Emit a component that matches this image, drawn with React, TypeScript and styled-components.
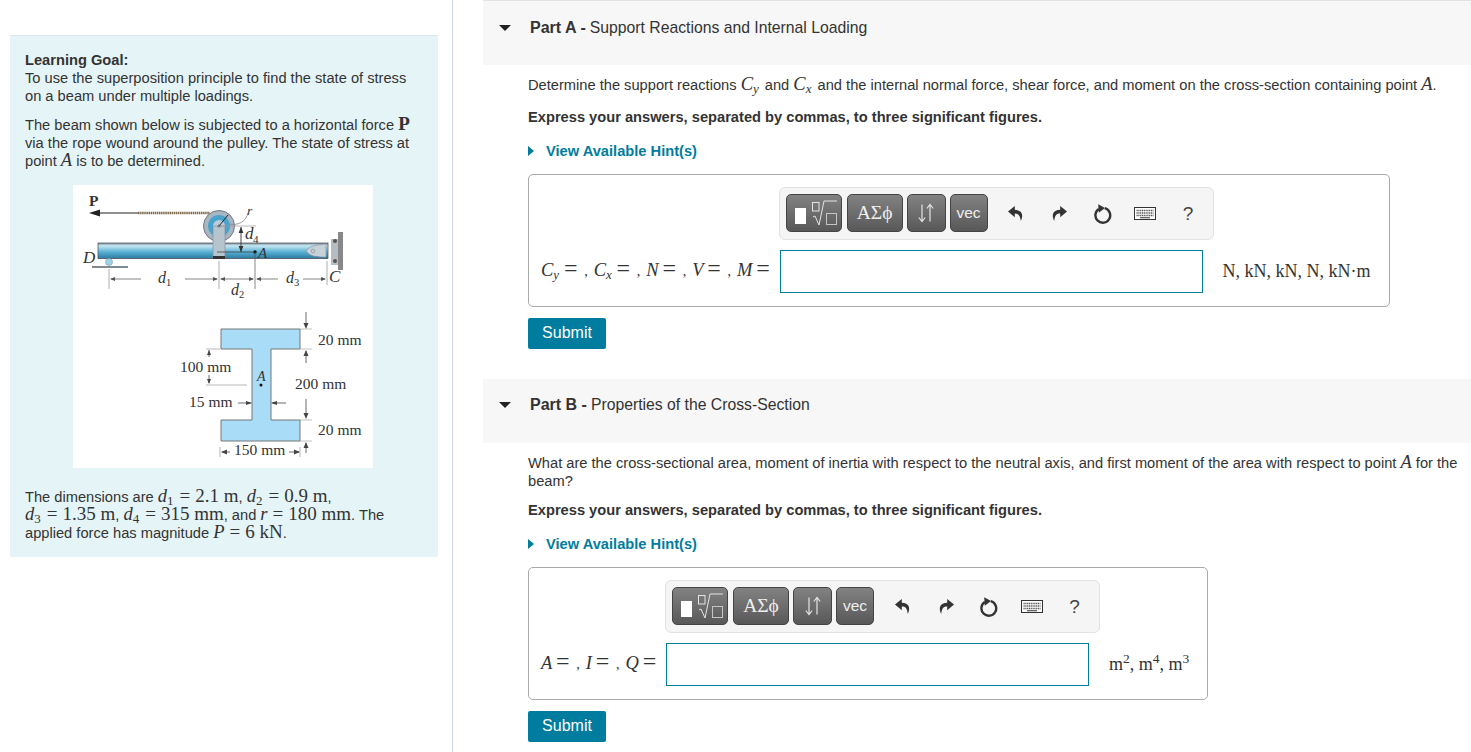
import React from "react";
import styled, { createGlobalStyle } from "styled-components";

const Global = createGlobalStyle`
  html, body { margin: 0; padding: 0; background: #fff; }
  body { font-family: "Liberation Sans", Arial, sans-serif; font-size: 14.67px; line-height: 18px; color: #333; }
`;

const Page = styled.div`
  display: flex;
  width: 1471px;
  height: 752px;
  overflow: hidden;
`;
const LeftColumn = styled.aside`
  width: 452px;
  height: 752px;
  flex: none;
  border-right: 1px solid #c9d6e2;
  padding-top: 35px;
  box-sizing: content-box;
`;
const GoalPanel = styled.div`
  margin-left: 10px;
  width: 428px;
  box-sizing: border-box;
  background: #e5f5f7;
  border-top: 1px solid #dde6ea;
  padding: 15px 14px 15px 15px;
`;
const GoalTitle = styled.div`
  font-weight: bold;
`;
const GoalText = styled.p<{ $gap?: number }>`
  margin: ${(p) => p.$gap ?? 0}px 0 0;
`;
const Figure = styled.div`
  width: 300px;
  height: 283px;
  margin: 15px 0 20px 48px;
  background: #fff;
`;
const RightColumn = styled.main`
  flex: 1;
  padding-left: 30px;
  min-width: 0;
`;
const PartHeader = styled.header<{ $first?: boolean }>`
  height: ${(p) => (p.$first ? 65 : 64)}px;
  margin-top: ${(p) => (p.$first ? 0 : 30)}px;
  background: #f7f7f7;
  border-top: ${(p) => (p.$first ? "1px solid #e3e3e3" : "none")};
  display: flex;
  align-items: flex-start;
  padding: ${(p) => (p.$first ? 18 : 17)}px 0 0 16px;
  box-sizing: border-box;
  font-size: 15.75px;
  color: #333;
`;
const Caret = styled.span`
  width: 0;
  height: 0;
  border-left: 6px solid transparent;
  border-right: 6px solid transparent;
  border-top: 6px solid #222;
  margin: 6px 19px 0 0;
`;
const PartLabel = styled.strong`
  font-weight: bold;
  font-size: 16px;
  margin-right: 4px;
`;
const PartBody = styled.section`
  padding: 11px 10px 0 45px;
`;
const Prompt = styled.p`
  margin: 0;
`;
const Instruction = styled.p<{ $top: number }>`
  margin: ${(p) => p.$top}px 0 0;
  font-weight: bold;
`;
const HintLink = styled.div`
  display: flex;
  align-items: center;
  margin-top: 16px;
  color: #007c9e;
  font-weight: bold;
`;
const HintCaret = styled.span`
  width: 0;
  height: 0;
  border-top: 5px solid transparent;
  border-bottom: 5px solid transparent;
  border-left: 6px solid #007c9e;
  margin-right: 12px;
`;
const AnswerBox = styled.div`
  margin-top: 14px;
  width: fit-content;
  box-sizing: border-box;
  border: 1px solid #aaa;
  border-radius: 5px;
  padding: 12px 18px 13px 12px;
  display: grid;
  grid-template-columns: auto 423px auto;
  row-gap: 10px;
`;
const Toolbar = styled.div`
  grid-column: 2 / 4;
  width: 435px;
  height: 53px;
  margin-left: -1px;
  box-sizing: border-box;
  background: #f5f5f5;
  border: 1px solid #e2e2e2;
  border-radius: 6px;
  display: flex;
  align-items: center;
  padding: 0 0 0 6px;
`;
const TemplateButton = styled.div<{ $w: number; $mr: number }>`
  width: ${(p) => p.$w}px;
  height: 38px;
  margin-right: ${(p) => p.$mr}px;
  margin-bottom: 1px;
  flex: none;
  box-sizing: border-box;
  border: 1px solid #444;
  border-radius: 5px;
  background: linear-gradient(#828282, #585858);
  color: #eee;
  display: flex;
  align-items: center;
  justify-content: center;
`;
const SerifGlyphs = styled.span`
  font-family: "Liberation Serif", serif;
  font-size: 19.5px;
`;
const SansGlyphs = styled.span`
  font-size: 15.5px;
`;
const ToolIcon = styled.span`
  width: 43px;
  flex: none;
  display: flex;
  justify-content: center;
  color: #444;
  font-size: 19px;
`;
const MathLabel = styled.div`
  grid-column: 1;
  align-self: center;
  margin: 0 6px 2px 0;
  white-space: nowrap;
`;
const AnswerInput = styled.div`
  grid-column: 2;
  height: 43px;
  box-sizing: border-box;
  border: 1px solid #007c9e;
  background: #fff;
`;
const Units = styled.div`
  grid-column: 3;
  align-self: center;
  margin: 0 0 1px 20px;
  white-space: nowrap;
  font-family: "Liberation Serif", serif;
  font-size: 18px;
`;
const SubmitButton = styled.button`
  display: block;
  margin-top: 11px;
  width: 78px;
  height: 31px;
  padding: 0 0 2px;
  border: none;
  border-radius: 2px;
  background: #007c9e;
  color: #fff;
  font: 16px "Liberation Sans", Arial, sans-serif;
`;
const V = styled.i<{ $size?: number }>`
  font-family: "Liberation Serif", serif;
  font-style: italic;
  font-size: ${(p) => p.$size ?? 18.5}px;
  line-height: 0;
`;
const R = styled.span<{ $bold?: boolean }>`
  font-family: "Liberation Serif", serif;
  font-size: 19px;
  line-height: 0;
  font-weight: ${(p) => (p.$bold ? "bold" : "normal")};
`;
const Sub = styled.sub<{ $after?: number }>`
  font-family: "Liberation Serif", serif;
  font-size: 13px;
  line-height: 0;
  vertical-align: -3px;
  margin-right: ${(p) => p.$after ?? 0}px;
`;
const Sup = styled.sup`
  font-family: "Liberation Serif", serif;
  font-size: 13.5px;
  line-height: 0;
  vertical-align: 7px;
`;
const Eq = styled.span<{ $large?: boolean }>`
  font-family: "Liberation Serif", serif;
  font-size: ${(p) => (p.$large ? 24 : 19)}px;
  line-height: 0;
  margin: 0 ${(p) => (p.$large ? 3.75 : 5)}px;
`;
const Comma = styled.span`
  font-family: "Liberation Serif", serif;
  font-size: 14px;
  line-height: 0;
  margin: 0 6px 0 3px;
`;

const RootIcon = () => (
  <svg width="54" height="36" viewBox="0 0 54 36" fill="none">
    <rect x="8" y="13" width="11" height="16" fill="#fff" />
    <rect x="25.5" y="7.5" width="6.5" height="8.5" stroke="#e4e4e4" />
    <path d="M26 22l2-1 4 9 5-24h13" stroke="#e4e4e4" strokeWidth="1" />
    <rect x="39.5" y="18.5" width="10" height="11" stroke="#c4c4c4" />
  </svg>
);
const SwapIcon = () => (
  <svg width="18" height="20" viewBox="0 0 18 20" fill="none" stroke="#e4e4e4" strokeWidth="1.2">
    <path d="M5 1.5V18M1.8 14.5 5 18.5l3.2-4" />
    <path d="M13 18.5V2M9.8 5.5 13 1.5l3.2 4" />
  </svg>
);
const UndoIcon = () => (
  <svg width="16" height="15" viewBox="0 0 16 15" fill="#333">
    <path d="M6.8 0 0 5.6l6.8 5.6V7.6c3.6 0 5.4 1.8 6 7.4 3-6.4 1.2-11-6-11.2z" />
  </svg>
);
const RedoIcon = () => (
  <svg width="16" height="15" viewBox="0 0 16 15" fill="#333">
    <path d="M9.2 0 16 5.6l-6.8 5.6V7.6c-3.6 0-5.4 1.8-6 7.4-3-6.4-1.2-11 6-11.2z" />
  </svg>
);
const ReloadIcon = () => (
  <svg width="19" height="20" viewBox="0 0 19 20" fill="none">
    <path d="M11.8 4.2a7.4 7.4 0 1 1-6 .9" stroke="#333" strokeWidth="2.4" />
    <path d="M5.2 0.3 12 4.1 5.8 8.8z" fill="#333" />
  </svg>
);
const KeyboardIcon = () => (
  <svg width="22" height="13" viewBox="0 0 22 13" fill="none">
    <rect x="0.5" y="0.5" width="21" height="12" fill="#fff" stroke="#333" />
    <path d="M2.5 3.5h17M2.5 6h17M2.5 8.5h17" stroke="#555" strokeWidth="1.4" strokeDasharray="1.2 .6" />
    <path d="M6 10.7h10" stroke="#555" strokeWidth="1.2" />
  </svg>
);

const FigureArt = () => (
  <svg width="300" height="283" viewBox="0 0 300 283" fontFamily="'Liberation Serif', serif" fill="#333">
    <defs>
      <linearGradient id="beam" x1="0" y1="0" x2="0" y2="1">
        <stop offset="0" stopColor="#7f8f9a" />
        <stop offset="0.18" stopColor="#c4e6f2" />
        <stop offset="0.6" stopColor="#55aed2" />
        <stop offset="1" stopColor="#2a7ba0" />
      </linearGradient>
    </defs>
    <text x="16" y="21" fontSize="15.5" fontWeight="bold">P</text>
    <path d="M26 28H65" stroke="#222" strokeWidth="1.2" />
    <path d="M16 28l11-3.5v7z" fill="#222" />
    <path d="M65 28H137" stroke="#7d6a4c" strokeWidth="2.4" strokeDasharray="1.5 .6" />
    <rect x="25" y="58" width="230" height="15.5" fill="url(#beam)" stroke="#445" strokeWidth=".7" />
    <circle cx="146" cy="41" r="15.5" fill="#a7b7c2" stroke="#778" />
    <circle cx="146" cy="41" r="11" fill="#4aa3cc" />
    <circle cx="146" cy="41" r="6" fill="#bcd" />
    <rect x="140" y="41" width="12" height="32" fill="#b5c4cd" stroke="#889" strokeWidth=".6" />
    <rect x="140" y="71" width="12" height="3" fill="#333" />
    <circle cx="146" cy="41" r="1.6" fill="#778" />
    <path d="M146 41l9-11" stroke="#222" strokeWidth="1" />
    <path d="M156 39c10 2 17-3 19-11" stroke="#888" strokeWidth=".8" fill="none" />
    <text x="174" y="30" fontSize="13.5" fontStyle="italic">r</text>
    <path d="M146 41H183" stroke="#999" strokeWidth=".7" />
    <path d="M168 42V67" stroke="#333" strokeWidth=".9" />
    <path d="M168 42l-2.4 6h4.8zM168 67l-2.4-6h4.8z" fill="#333" />
    <text x="172" y="54" fontSize="17" fontStyle="italic">d</text>
    <text x="180" y="58" fontSize="11">4</text>
    <path d="M144 67H182" stroke="#333" strokeWidth=".7" />
    <circle cx="182" cy="67" r="1.7" fill="#111" />
    <text x="185" y="73" fontSize="15" fontStyle="italic">A</text>
    <path d="M182 67V104" stroke="#555" strokeWidth=".7" />
    <path d="M233 66c4-6 12-6 20-7v13c-8 0-16 0-20-6z" fill="#c6d2d8" stroke="#889" strokeWidth=".6" />
    <circle cx="240" cy="66" r="1.8" fill="none" stroke="#888" strokeWidth=".6" />
    <rect x="265" y="47" width="5" height="38" fill="#888" />
    <rect x="258" y="54" width="7" height="26" fill="#b5bcc2" />
    <circle cx="262" cy="56" r="2" fill="#555" />
    <circle cx="262" cy="76" r="2" fill="#555" />
    <text x="10" y="78" fontSize="17" fontStyle="italic">D</text>
    <circle cx="36" cy="77" r="3.5" fill="#9cd3e8" stroke="#789" strokeWidth=".5" />
    <rect x="19" y="81" width="36" height="2" fill="#7f8a90" />
    <path d="M36 84V104M146 76V104M254 76V100" stroke="#999" strokeWidth=".8" />
    <path d="M38 94H68M112 94H144M148 94H180M184 94H205M230 94H252" stroke="#666" strokeWidth=".8" />
    <path d="M37 94l5-2v4zM145 94l-5-2v4zM147 94l5-2v4zM181 94l-5-2v4zM183 94l5-2v4zM253 94l-5-2v4z" fill="#555" />
    <text x="85" y="98" fontSize="16" fontStyle="italic">d</text>
    <text x="93" y="101" fontSize="10.5">1</text>
    <text x="158" y="110" fontSize="16" fontStyle="italic">d</text>
    <text x="166" y="113" fontSize="10.5">2</text>
    <text x="213" y="98" fontSize="16" fontStyle="italic">d</text>
    <text x="221" y="101" fontSize="10.5">3</text>
    <text x="256" y="97" fontSize="17" fontStyle="italic">C</text>

    <path d="M148 144H227V164H198V235H227V256H148V235H179V164H148Z" fill="#a9dcf6" stroke="#777" strokeWidth="1" />
    <path d="M233 127V142M233 166V178M233 214V229M233 258V268" stroke="#444" strokeWidth=".8" />
    <path d="M233 144l-2.5-6h5zM233 165l-2.5 6h5zM233 234l-2.5-6h5zM233 257l-2.5 6h5z" fill="#444" />
    <path d="M227 144H239M227 164H239M227 235H239M227 256H239" stroke="#aaa" strokeWidth=".7" />
    <text x="245" y="160" fontSize="15.5">20 mm</text>
    <text x="245" y="250" fontSize="15.5">20 mm</text>
    <text x="222" y="204" fontSize="15.5">200 mm</text>
    <text x="107" y="187" fontSize="15.5">100 mm</text>
    <text x="116" y="222" fontSize="15.5">15 mm</text>
    <text x="161" y="270" fontSize="15.5">150 mm</text>
    <path d="M133 164H147M133 200H174" stroke="#999" strokeWidth=".7" />
    <path d="M136 165V172M136 190V198" stroke="#444" strokeWidth=".8" />
    <path d="M136 165l-2 5h4zM136 199l-2-5h4z" fill="#444" />
    <path d="M165 218H178M199 218H213" stroke="#444" strokeWidth=".8" />
    <path d="M179 218l-6-2v4zM198 218l6-2v4z" fill="#444" />
    <path d="M147 262V272M227 262V272" stroke="#888" strokeWidth=".6" />
    <path d="M149 267H157M216 267H226" stroke="#444" strokeWidth=".8" />
    <path d="M148 267l6-2.5v5zM227 267l-6-2.5v5z" fill="#444" />
    <text x="184" y="196" fontSize="14" fontStyle="italic">A</text>
    <circle cx="188" cy="200" r="1.5" fill="#111" />
  </svg>
);

const ToolbarContent = () => (
  <Toolbar>
    <TemplateButton $w={56} $mr={5}><RootIcon /></TemplateButton>
    <TemplateButton $w={56} $mr={4}><SerifGlyphs>ΑΣϕ</SerifGlyphs></TemplateButton>
    <TemplateButton $w={39} $mr={4}><SwapIcon /></TemplateButton>
    <TemplateButton $w={38} $mr={7}><SansGlyphs>vec</SansGlyphs></TemplateButton>
    <ToolIcon><UndoIcon /></ToolIcon>
    <ToolIcon><RedoIcon /></ToolIcon>
    <ToolIcon><ReloadIcon /></ToolIcon>
    <ToolIcon><KeyboardIcon /></ToolIcon>
    <ToolIcon>?</ToolIcon>
  </Toolbar>
);

export default function App() {
  return (
    <Page>
      <Global />
      <LeftColumn>
        <GoalPanel>
          <GoalTitle>Learning Goal:</GoalTitle>
          <GoalText>To use the superposition principle to find the state of stress on a beam under multiple loadings.</GoalText>
          <GoalText $gap={11}>
            The beam shown below is subjected to a horizontal force <R $bold>P</R> via the rope wound around the pulley. The state of stress at point <V>A</V> is to be determined.
          </GoalText>
          <Figure><FigureArt /></Figure>
          <GoalText>
            The dimensions are <V>d</V><Sub $after={1}>1</Sub><Eq>=</Eq><R>2.1 m</R>, <V>d</V><Sub $after={1}>2</Sub><Eq>=</Eq><R>0.9 m</R>,<br />
            <V>d</V><Sub $after={1}>3</Sub><Eq>=</Eq><R>1.35 m</R>, <V>d</V><Sub $after={1}>4</Sub><Eq>=</Eq><R>315 mm</R>, and <V>r</V><Eq>=</Eq><R>180 mm</R>. The<br />
            applied force has magnitude <V>P</V><Eq>=</Eq><R>6 kN</R>.
          </GoalText>
        </GoalPanel>
      </LeftColumn>
      <RightColumn>
        <PartHeader $first>
          <Caret />
          <span><PartLabel>Part A -</PartLabel>Support Reactions and Internal Loading</span>
        </PartHeader>
        <PartBody>
          <Prompt>
            Determine the support reactions <V>C</V><Sub $after={2}><i>y</i></Sub> and <V>C</V><Sub $after={2}><i>x</i></Sub> and the internal normal force, shear force, and moment on the cross-section containing point <V>A</V>.
          </Prompt>
          <Instruction $top={14}>Express your answers, separated by commas, to three significant figures.</Instruction>
          <HintLink><HintCaret />View Available Hint(s)</HintLink>
          <AnswerBox>
            <ToolbarContent />
            <MathLabel>
              <V>C</V><Sub $after={1}><i>y</i></Sub><Eq $large>=</Eq><Comma>,</Comma><V>C</V><Sub $after={1}><i>x</i></Sub><Eq $large>=</Eq><Comma>,</Comma><V>N</V><Eq $large>=</Eq><Comma>,</Comma><V>V</V><Eq $large>=</Eq><Comma>,</Comma><V>M</V><Eq $large>=</Eq>
            </MathLabel>
            <AnswerInput />
            <Units>N, kN, kN, N, kN·m</Units>
          </AnswerBox>
          <SubmitButton>Submit</SubmitButton>
        </PartBody>
        <PartHeader>
          <Caret />
          <span><PartLabel>Part B -</PartLabel>Properties of the Cross-Section</span>
        </PartHeader>
        <PartBody>
          <Prompt>
            What are the cross-sectional area, moment of inertia with respect to the neutral axis, and first moment of the area with respect to point <V>A</V> for the beam?
          </Prompt>
          <Instruction $top={11}>Express your answers, separated by commas, to three significant figures.</Instruction>
          <HintLink><HintCaret />View Available Hint(s)</HintLink>
          <AnswerBox>
            <ToolbarContent />
            <MathLabel>
              <V>A</V><Eq $large>=</Eq><Comma>,</Comma><V>I</V><Eq $large>=</Eq><Comma>,</Comma><V>Q</V><Eq $large>=</Eq>
            </MathLabel>
            <AnswerInput />
            <Units>m<Sup>2</Sup>, m<Sup>4</Sup>, m<Sup>3</Sup></Units>
          </AnswerBox>
          <SubmitButton>Submit</SubmitButton>
        </PartBody>
      </RightColumn>
    </Page>
  );
}
